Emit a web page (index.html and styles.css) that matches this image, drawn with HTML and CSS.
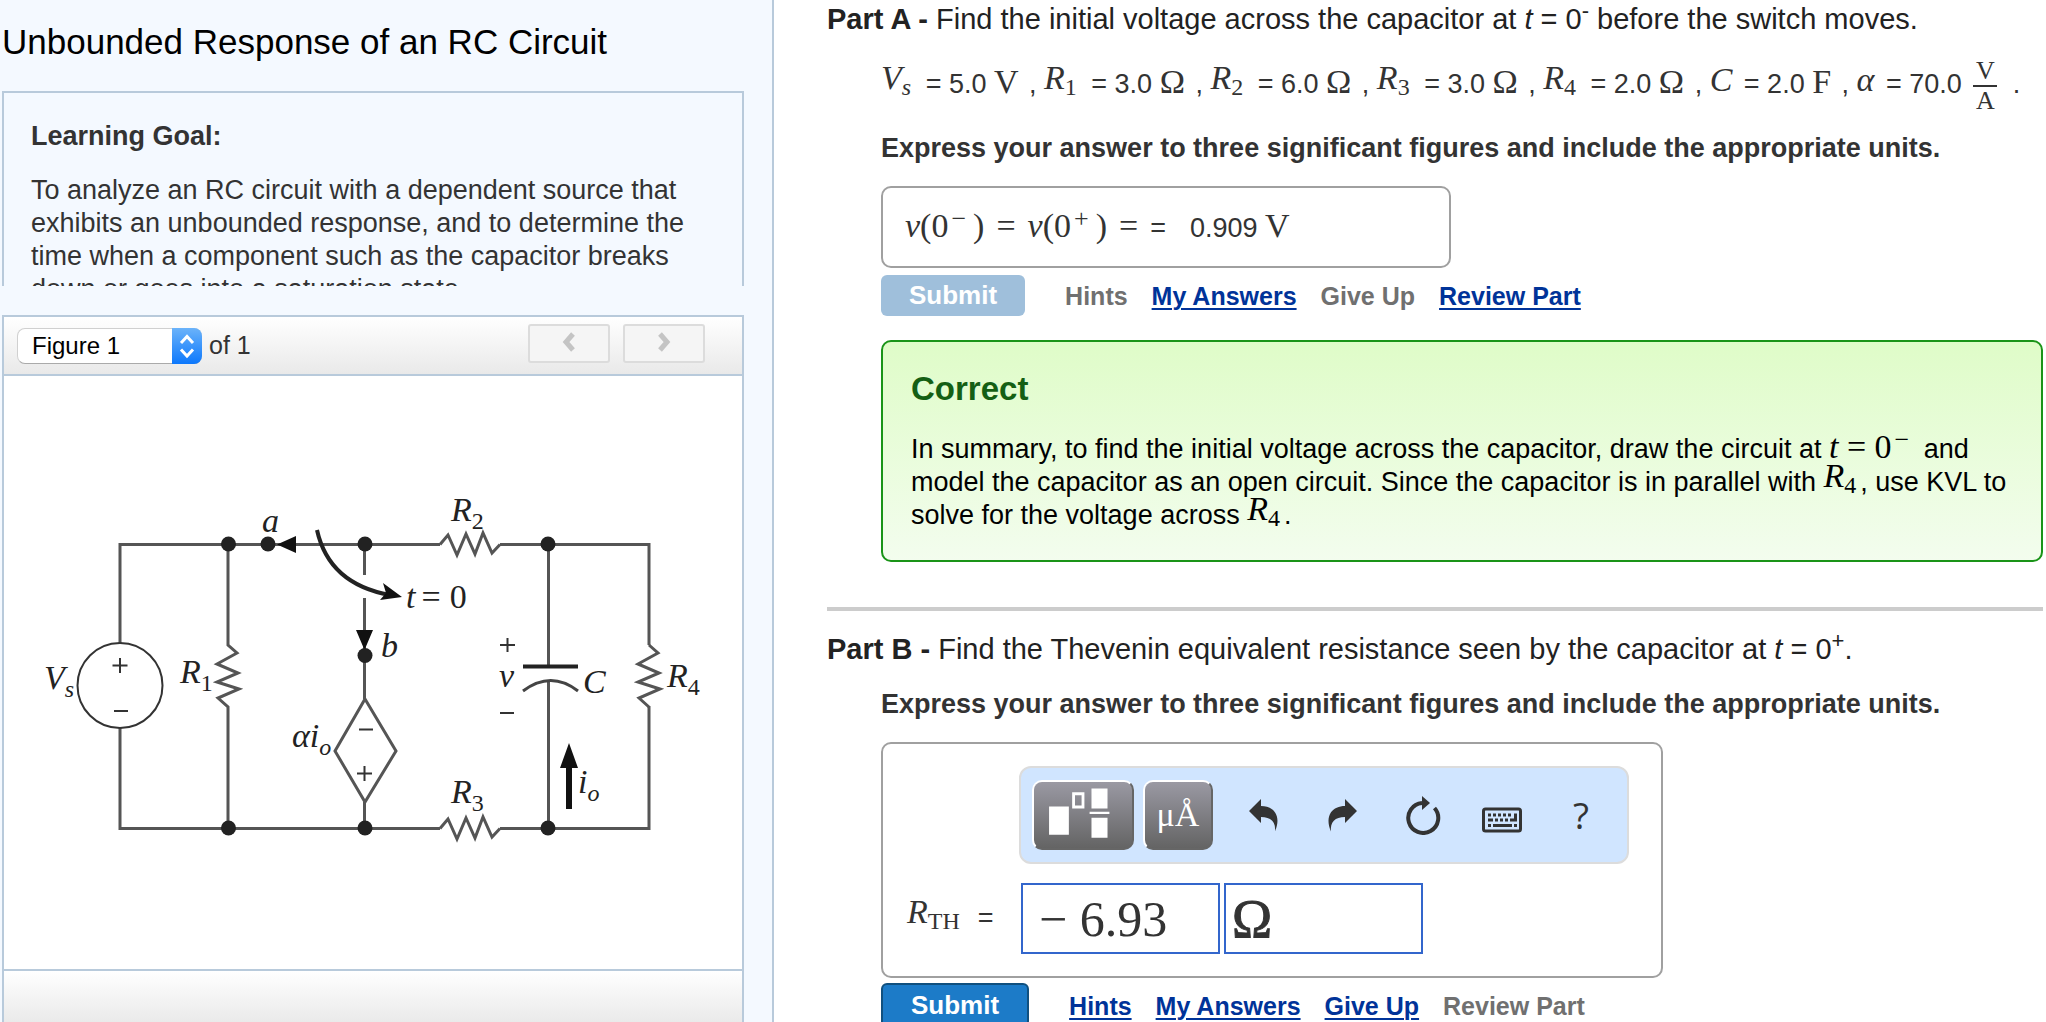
FILE: index.html
```html
<!DOCTYPE html>
<html lang="en">
<head>
<meta charset="utf-8">
<title>Unbounded Response of an RC Circuit</title>
<link rel="stylesheet" href="styles.css">
</head>
<body>
<div class="page">
  <aside class="side">
    <h1 class="title">Unbounded Response of an RC Circuit</h1>
    <section class="goal">
      <h2 class="goal-head">Learning Goal:</h2>
      <p class="goal-text">To analyze an RC circuit with a dependent source that exhibits an unbounded response, and to determine the time when a component such as the capacitor breaks down or goes into a saturation state.</p>
    </section>
    <section class="figure">
      <header class="figure-bar">
        <div class="picker">
          <select class="picker-select" id="figure" aria-label="Figure"><option>Figure 1</option></select>
          <svg class="picker-arrows" viewBox="0 0 30 35" aria-hidden="true"><path d="M9 14.500 15 8l6 6.500M9 21l6 6.500 6-6.500"/></svg>
        </div>
        <label for="figure" class="figure-count">of 1</label>
        <div class="figure-nav">
          <button class="nav-button" type="button" aria-label="Previous"><svg viewBox="0 0 16 20"><path d="M12 2 5 10l7 8"/></svg></button>
          <button class="nav-button" type="button" aria-label="Next"><svg viewBox="0 0 16 20"><path d="M4 2l7 8-7 8"/></svg></button>
        </div>
      </header>
      <svg class="circuit" viewBox="4 376 738 593" role="img" aria-label="RC circuit with a dependent source">
        <g class="wire">
          <path d="M120 643V544.500H440M500 544.500H649V645M649 706V828.500H500M440 828.500H120V728"/>
          <path d="M228 544V645l9 8-20 11 21 9-21 9 22 7-21 9 10 9V828"/>
          <path d="M649 645l9 8-20 11 21 9-21 9 22 7-21 9 10 9"/>
          <path d="M440 544.500 448 535l9 20 9-21 9 20 8-21 9 20 8-8.500M440 828.500 448 819l9 20 9-21 9 20 8-21 9 20 8-8.500"/>
          <path d="M364.500 544v31M364.500 598v101M364.500 802v26M548.500 544V666M548.500 682V828"/>
          <path d="M365 699 396 751 365 802 335 751z"/>
        </g>
        <circle class="thin" cx="120" cy="685.500" r="42.500"/>
        <path class="thin" d="M112.500 665.500h15M120 658v15M114 711h14M359 729.500h14M357 773.500h15M364.500 766v15M500 645h15M507.500 638v14M500 713h14"/>
        <path class="plate" d="M523 666.500h55"/>
        <path class="curve" d="M523 691Q551 670 578 691"/>
        <path class="swing" d="M317 530Q329 584 390 595"/>
        <path class="solid" d="M402 597 383 583 386 593 380 600zM277 544.500 296 536v17zM364.500 650 356 630h17zM569 743 578 768h-6v41h-6v-41h-6z"/>
        <g class="dots"><circle cx="228.500" cy="544" r="7.500"/><circle cx="268" cy="544" r="7.500"/><circle cx="365" cy="544" r="7.500"/><circle cx="548" cy="544" r="7.500"/><circle cx="365" cy="655.500" r="7.500"/><circle cx="228.500" cy="828" r="7.500"/><circle cx="365" cy="828" r="7.500"/><circle cx="548" cy="828" r="7.500"/></g>
        <g class="names">
          <text x="44" y="689">V<tspan class="low" dy="8">s</tspan></text>
          <text x="180" y="683">R<tspan class="low up" dy="8">1</tspan></text>
          <text x="451" y="521">R<tspan class="low up" dy="8">2</tspan></text>
          <text x="451" y="803">R<tspan class="low up" dy="8">3</tspan></text>
          <text x="667" y="687">R<tspan class="low up" dy="8">4</tspan></text>
          <text x="262" y="532">a</text>
          <text x="381" y="657">b</text>
          <text x="406" y="608">t<tspan class="up" dx="6">=</tspan><tspan class="up" dx="9">0</tspan></text>
          <text x="499" y="687">v</text>
          <text x="583" y="693">C</text>
          <text x="292" y="747">αi<tspan class="low" dy="8">o</tspan></text>
          <text x="578" y="793">i<tspan class="low" dy="8">o</tspan></text>
        </g>
      </svg>
      <footer class="figure-foot"></footer>
    </section>
  </aside>

  <main class="work">
    <section class="part">
      <h2 class="part-head"><b>Part A - </b>Find the initial voltage across the capacitor at <i>t</i> = 0<sup>-</sup> before the switch moves.</h2>
      <div class="part-body">
        <p class="given"><span class="term"><span class="var"><i>V</i><sub><i>s</i></sub></span> = 5.0 <span class="unit">V</span> ,</span> <span class="term"><span class="var"><i>R</i><sub>1</sub></span> = 3.0 <span class="unit">Ω</span> ,</span> <span class="term"><span class="var"><i>R</i><sub>2</sub></span> = 6.0 <span class="unit">Ω</span> ,</span> <span class="term"><span class="var"><i>R</i><sub>3</sub></span> = 3.0 <span class="unit">Ω</span> ,</span> <span class="term"><span class="var"><i>R</i><sub>4</sub></span> = 2.0 <span class="unit">Ω</span> ,</span> <span class="term"><span class="var bare"><i>C</i></span> = 2.0 <span class="unit">F</span> ,</span> <span class="term"><span class="var bare"><i>α</i></span> = 70.0 <span class="frac"><span>V</span><span>A</span></span> .</span></p>
        <p class="ask">Express your answer to three significant figures and include the appropriate units.</p>
        <div class="answer answer-done"><span class="math"><i>v</i>(0<sup>−</sup>)</span><span class="math">=</span><span class="math"><i>v</i>(0<sup>+</sup>)</span><span class="math">=</span><span>=</span><span class="value">0.909 <span class="unit">V</span></span></div>
        <div class="actions">
          <button class="submit" type="button" disabled>Submit</button>
          <nav class="links"><span>Hints</span><a href="#answers-a">My Answers</a><span>Give Up</span><a href="#review-a">Review Part</a></nav>
        </div>
        <div class="feedback">
          <h3 class="feedback-head">Correct</h3>
          <p>In summary, to find the initial voltage across the capacitor, draw the circuit at <span class="math flat"><i>t</i> = 0<sup>−</sup></span> and model the capacitor as an open circuit. Since the capacitor is in parallel with <span class="var tight"><i>R</i><sub>4</sub></span>, use KVL to solve for the voltage across <span class="var tight"><i>R</i><sub>4</sub></span>.</p>
        </div>
      </div>
    </section>
    <hr class="rule">
    <section class="part">
      <h2 class="part-head"><b>Part B - </b>Find the Thevenin equivalent resistance seen by the capacitor at <i>t</i> = 0<sup>+</sup>.</h2>
      <div class="part-body">
        <p class="ask ask-b">Express your answer to three significant figures and include the appropriate units.</p>
        <div class="answer entry">
          <div class="tools">
            <button class="tool" type="button" aria-label="Templates"><svg class="tool-templates" viewBox="0 0 102 70"><path class="white" d="M15 26h21v30H15zM60 7h17v21H60zM60 38h17v21H60zM58 31.500h21v2.500H58z"/><path class="box" d="M41 12.500h10v14H41z"/></svg></button>
            <button class="tool tool-units" type="button">μÅ</button>
            <div class="icons">
              <button class="icon" type="button" aria-label="Undo"><svg viewBox="0 0 40 40"><path d="M6 16 18 4v7C30 11 39 20 32 36.500 33 27 28 22 18 22v6z"/></svg></button>
              <button class="icon" type="button" aria-label="Redo"><svg viewBox="0 0 40 40"><path d="M34 16 22 4v7C10 11 1 20 8 36.500 7 27 12 22 22 22v6z"/></svg></button>
              <button class="icon" type="button" aria-label="Reset"><svg viewBox="0 0 40 40"><path class="ring" d="M20 8A15 15 0 1 0 32.500 13"/><path d="M20 1 28 8 20 15z"/></svg></button>
              <button class="icon" type="button" aria-label="Keyboard"><svg viewBox="0 0 40 40"><rect class="case" x="1.500" y="14" width="37" height="22" rx="2"/><path class="keys" d="M6 20h3m2 0h3m2 0h3m2 0h3m2 0h3M6 25h5m2 0h3m2 0h3m2 0h3m2 0h3M6 30.500h3m2 0h19m2 0h3M33.500 18.500V25H29"/></svg></button>
              <button class="icon help" type="button">?</button>
            </div>
          </div>
          <label class="entry-label" for="value"><span class="var"><i>R</i><sub>TH</sub></span>=</label>
          <div class="fields">
            <input class="field field-value" id="value" type="text" value="− 6.93">
            <input class="field field-unit" type="text" value="Ω" aria-label="Units">
          </div>
        </div>
        <div class="actions actions-b">
          <button class="submit submit-live" type="button">Submit</button>
          <nav class="links"><a href="#hints">Hints</a><a href="#answers-b">My Answers</a><a href="#give-up">Give Up</a><span>Review Part</span></nav>
        </div>
      </div>
    </section>
  </main>
</div>
</body>
</html>
```
FILE: styles.css
```css
* { box-sizing: border-box; }

body {
  margin: 0;
  background: #fff;
  color: #333;
  font: 27px/33px "Liberation Sans", Arial, sans-serif;
}

h1, h2, h3, p { margin: 0; font-weight: normal; }
button, input, select { font-family: inherit; }

.page {
  display: grid;
  grid-template-columns: 774fr 1272fr;
  height: 100vh;
}

/* Left column: goal and figure */
.side {
  display: flex;
  flex-direction: column;
  min-width: 0;
  padding: 0 28px 0 2px;
  overflow: hidden;
  background: #f4f9ff;
  border-right: 2px solid #b8cadb;
}
.title {
  padding: 21px 0 29px;
  color: #000;
  font-size: 35px;
  line-height: 41px;
}
.goal {
  flex: none;
  height: 195px;
  padding: 27px 48px 0 27px;
  overflow: hidden;
  border: 2px solid #b8cadb;
  border-bottom: 0;
}
.goal-head { margin-bottom: 21px; font-size: 27px; font-weight: bold; line-height: 33px; }
.figure {
  flex: none;
  margin-top: 29px;
  background: #fff;
  border: 2px solid #b8cadb;
}
.figure-bar {
  display: flex;
  align-items: center;
  height: 59px;
  padding: 0 37px 0 13px;
  background: linear-gradient(#fff, #e9e9e9);
  border-bottom: 2px solid #b8cadb;
}
.picker { display: grid; width: 185px; height: 36px; }
.picker-select, .picker-arrows { grid-area: 1 / 1; }
.picker-select {
  padding: 0 14px;
  appearance: none;
  background: #fff;
  border: 1px solid #d0d0d0;
  border-bottom-color: #aaa;
  border-radius: 8px;
  color: #000;
  font-size: 24px;
}
.picker-arrows {
  justify-self: end;
  width: 30px;
  height: 36px;
  pointer-events: none;
  background: linear-gradient(#6bb3fa, #0d78fc);
  border-radius: 0 8px 8px 0;
  fill: none;
  stroke: #fff;
  stroke-width: 3;
}
.figure-count { margin-left: 7px; font-size: 25px; }
.figure-nav { display: flex; gap: 13px; margin: 0 0 4px auto; }
.nav-button {
  width: 82px;
  height: 39px;
  padding: 0;
  background: #f5f5f5;
  border: 2px solid #dcdcdc;
  border-radius: 3px;
}
.nav-button svg { width: 16px; height: 20px; fill: none; stroke: #c4c4c4; stroke-width: 5; }
.circuit { display: block; width: 100%; height: auto; }
.figure-foot { height: 60px; background: linear-gradient(#fff, #e7e7e7); border-top: 2px solid #b8cadb; }

.wire { fill: none; stroke: #555; stroke-width: 3; }
.thin { fill: none; stroke: #333; stroke-width: 2; }
.curve { fill: none; stroke: #444; stroke-width: 3; }
.plate { stroke: #222; stroke-width: 4; }
.swing { fill: none; stroke: #222; stroke-width: 4; }
.solid { fill: #111; }
.dots { fill: #222; }
.names { fill: #222; font: italic 34px "Liberation Serif", serif; }
.low { font-size: 24px; }
.up { font-style: normal; }

/* Right column: the parts */
.work { min-width: 0; padding: 0 3px 0 53px; overflow: hidden; }
.part-head { color: #222; font-size: 29px; line-height: 38px; }
.part-head sup { font-size: 22px; line-height: 0; }
.part-body { padding-left: 54px; }

.given { height: 88px; padding-top: 16px; line-height: 60px; white-space: nowrap; }
.var, .math, .unit, .frac { font-family: "Liberation Serif", serif; }
.var { margin-right: 7px; font-size: 34px; line-height: 0; vertical-align: 4px; }
.var sub { font-size: 24px; line-height: 0; vertical-align: -6px; }
.bare { vertical-align: 2px; margin-right: 4px; }
.tight { margin-right: 4px; }
.unit { font-size: 34px; line-height: 0; margin-right: 3px; }
.frac {
  display: inline-flex;
  flex-direction: column;
  width: 24px;
  margin: 0 8px 0 4px;
  font-size: 26px;
  line-height: 28px;
  text-align: center;
  vertical-align: middle;
}
.frac span + span { border-top: 2px solid #333; }

.ask { padding: 6px 0 21px; font-weight: bold; }
.ask-b { padding-top: 20px; }

.answer { border: 2px solid #a0a0a0; border-radius: 10px; }
.answer-done {
  display: flex;
  align-items: baseline;
  gap: 12px;
  width: 570px;
  height: 82px;
  padding: 20px 22px;
}
.math { font-size: 34px; line-height: 36px; }
.math sup { margin: 0 7px 0 3px; font-size: 26px; line-height: 0; vertical-align: 10px; }
.flat { line-height: 0; }
.value { margin-left: 12px; }

.actions { display: flex; align-items: center; gap: 40px; margin-top: 7px; }
.actions-b { margin-top: 5px; }
.submit {
  height: 41px;
  padding: 0 28px;
  background: #9fbfdb;
  border: 0;
  border-radius: 6px;
  color: #fff;
  font-size: 26px;
  font-weight: bold;
}
.submit-live { height: 44px; background: #1c7bc8; border: 2px solid #10507f; }
.links { display: flex; gap: 24px; padding-top: 2px; color: #707070; font-size: 25px; font-weight: bold; }
.links a { color: #039; text-decoration-thickness: 2px; text-underline-offset: 3px; }

.feedback {
  margin-top: 24px;
  padding: 28px 26px 28px 28px;
  background: linear-gradient(#dffcc8, #f3fdee);
  border: 2px solid #1a9418;
  border-radius: 10px;
  color: #000;
}
.feedback-head { margin-bottom: 25px; color: #145f14; font-size: 33px; font-weight: bold; line-height: 38px; }

.rule { height: 4px; margin: 45px 0 19px; background: #ccc; border: 0; }

/* Part B entry box */
.entry {
  display: grid;
  grid-template-columns: 114px 610px;
  align-items: center;
  gap: 19px 0;
  width: 782px;
  padding: 22px 0 22px 22px;
}
.tools {
  display: flex;
  grid-column: 2;
  align-items: center;
  gap: 9px;
  height: 98px;
  padding: 0 11px;
  background: #d0e5ff;
  border: 2px solid #dcdcdc;
  border-radius: 12px;
}
.tool {
  flex: none;
  width: 102px;
  height: 70px;
  padding: 0;
  background: linear-gradient(#9a99a3, #646464);
  border: 2px solid #fff;
  border-right-color: #666;
  border-bottom-color: #666;
  border-radius: 10px;
}
.tool-templates { display: block; width: 98px; height: 66px; }
.white { fill: #fff; }
.box { fill: none; stroke: #fff; stroke-width: 3; }
.tool-units { width: 70px; color: #fff; font: 34px "Liberation Serif", serif; }
.icons { display: flex; flex: 1; justify-content: space-between; padding: 0 15px 0 21px; }
.icon { width: 40px; height: 40px; padding: 0; background: none; border: 0; color: #333; }
.icon svg { display: block; width: 40px; height: 40px; fill: #333; }
.icon .ring { fill: none; stroke: #333; stroke-width: 4; }
.icon .case { fill: none; stroke: #333; stroke-width: 3; }
.icon .keys { fill: none; stroke: #333; stroke-width: 3; }
.help { font: 37px/36px "Open Sans", sans-serif; }
.entry-label { padding-left: 2px; }
.entry-label .var { margin-right: 18px; }
.fields { display: flex; gap: 4px; padding-left: 2px; }
.field {
  width: 199px;
  height: 71px;
  padding: 0 0 0 16px;
  background: #fff;
  border: 2px solid #36c;
  color: #333;
  font: 50px "Liberation Serif", serif;
}
.field-unit { padding-left: 6px; font-size: 54px; -webkit-text-stroke: 1px #333; }
```
